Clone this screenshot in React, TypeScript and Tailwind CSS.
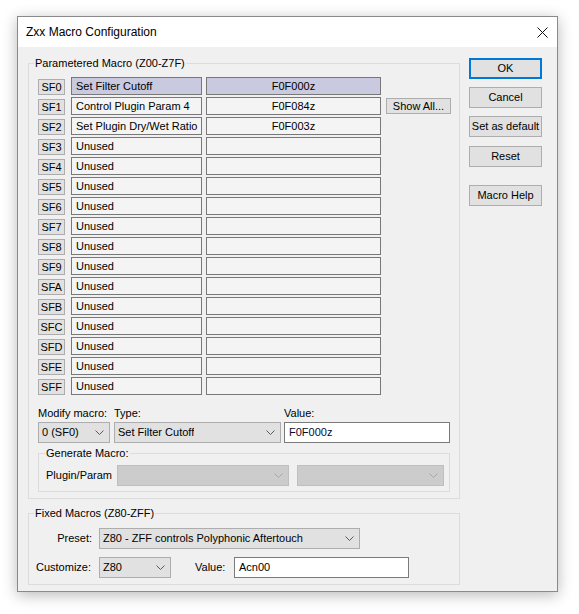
import React from 'react';
import clsx from 'clsx';

type Macro = { slot: string; name: string; value: string };

const macros: Macro[] = [
  { slot: 'SF0', name: 'Set Filter Cutoff', value: 'F0F000z' },
  { slot: 'SF1', name: 'Control Plugin Param 4', value: 'F0F084z' },
  { slot: 'SF2', name: 'Set Plugin Dry/Wet Ratio', value: 'F0F003z' },
  ...['SF3', 'SF4', 'SF5', 'SF6', 'SF7', 'SF8', 'SF9', 'SFA', 'SFB', 'SFC', 'SFD', 'SFE', 'SFF'].map(
    (slot) => ({ slot, name: 'Unused', value: '' })
  ),
];

const Chevron: React.FC<{ disabled?: boolean }> = ({ disabled }) => (
  <svg width="9" height="5" viewBox="0 0 9 5" className="shrink-0">
    <polyline
      points="0.5,0.5 4.5,4.5 8.5,0.5"
      fill="none"
      stroke={disabled ? '#a8a8a8' : '#5a5a5a'}
      strokeWidth="1"
    />
  </svg>
);

const Combo: React.FC<{ className?: string; text?: string; disabled?: boolean }> = ({
  className,
  text,
  disabled,
}) => (
  <div
    className={clsx(
      'flex h-[21px] items-center justify-between border pl-[3px] pr-[5px]',
      disabled ? 'border-[#bfbfbf] bg-[#cccccc]' : 'border-[#adadad] bg-[#e1e1e1]',
      className
    )}
  >
    <span className="truncate">{text}</span>
    <Chevron disabled={disabled} />
  </div>
);

const Button: React.FC<{ label: string; primary?: boolean; className?: string }> = ({
  label,
  primary,
  className,
}) => (
  <div
    className={clsx(
      'flex h-[21px] w-[73px] items-center justify-center bg-[#e1e1e1]',
      primary ? 'border-2 border-[#0078d7]' : 'border border-[#adadad]',
      className
    )}
  >
    {label}
  </div>
);

const MacroRow: React.FC<{ macro: Macro; selected: boolean; showAll?: boolean }> = ({
  macro,
  selected,
  showAll,
}) => {
  const box = selected ? 'bg-[#c9c9df]' : 'bg-[#f4f4f4]';
  return (
    <div className="mb-[2px] flex h-[18px] items-end">
      {/* slot button */}
      <div className="flex h-[16px] w-[27px] items-center justify-center border border-[#adadad] bg-[#e1e1e1]">
        {macro.slot}
      </div>
      {/* name */}
      <div className={clsx('ml-[6px] flex h-[18px] w-[131px] items-center border border-[#787878] pl-[4px]', box)}>
        {macro.name}
      </div>
      {/* value */}
      <div className={clsx('ml-[4px] flex h-[18px] w-[175px] items-center justify-center border border-[#787878]', box)}>
        {macro.value}
      </div>
      {showAll && (
        <div className="ml-[5px] flex h-[16px] w-[65px] items-center justify-center self-center border border-[#adadad] bg-[#e1e1e1]">
          Show All...
        </div>
      )}
    </div>
  );
};

export default function App() {
  return (
    <div className="min-h-[614px] bg-white pl-[17px] pt-[16px] font-['Liberation_Sans',Arial,sans-serif] text-[11px] text-black">
      <div className="flex h-[576px] w-[541px] flex-col border border-[#8a8a8a] bg-[#f0f0f0] shadow-[0_3px_14px_rgba(0,0,0,0.28)]">
        {/* Title bar */}
        <div className="flex h-[30px] shrink-0 items-center justify-between bg-white pl-[8px] pr-[9px]">
          <span className="text-[12px]">Zxx Macro Configuration</span>
          <svg width="11" height="11" viewBox="0 0 11 11">
            <path d="M0.5 0.5 L10.5 10.5 M10.5 0.5 L0.5 10.5" stroke="#111" strokeWidth="1" />
          </svg>
        </div>

        {/* Body */}
        <div className="flex flex-1 pl-[10px]">
          <div className="flex w-[432px] flex-col">
            {/* Parametered Macro group */}
            <fieldset className="mt-[9px] border border-[#dcdcdc] p-0">
              <legend className="ml-[5px] px-[1px] leading-[14px]">Parametered Macro (Z00-Z7F)</legend>
              <div className="pb-[6px] pl-[9px] pt-[7px]">
                {macros.map((m, i) => (
                  <MacroRow key={m.slot} macro={m} selected={i === 0} showAll={i === 1} />
                ))}

                <div className="mt-[12px] flex leading-[13px]">
                  <span className="w-[76px]">Modify macro:</span>
                  <span className="w-[170px]">Type:</span>
                  <span>Value:</span>
                </div>
                <div className="mt-[2px] flex">
                  <Combo className="w-[72px]" text="0 (SF0)" />
                  <Combo className="ml-[4px] w-[167px]" text="Set Filter Cutoff" />
                  <div className="ml-[3px] flex h-[21px] w-[166px] items-center border border-[#7a7a7a] bg-white pl-[4px] text-[#0a0a30]">
                    F0F000z
                  </div>
                </div>

                {/* Generate Macro group */}
                <fieldset className="mt-[3px] w-[412px] border border-[#dcdcdc] p-0">
                  <legend className="ml-[6px] px-[1px] leading-[14px]">Generate Macro:</legend>
                  <div className="flex items-center pb-[5px] pl-[7px] pt-[5px]">
                    <span className="w-[71px]">Plugin/Param</span>
                    <Combo className="w-[172px]" disabled />
                    <Combo className="ml-[8px] w-[147px]" disabled />
                  </div>
                </fieldset>
              </div>
            </fieldset>

            {/* Fixed Macros group */}
            <fieldset className="mt-[7px] border border-[#dcdcdc] p-0">
              <legend className="ml-[5px] px-[1px] leading-[14px]">Fixed Macros (Z80-ZFF)</legend>
              <div className="pb-[6px] pl-[7px] pt-[8px]">
                <div className="flex items-center">
                  <span className="w-[63px] pr-[7px] text-right">Preset:</span>
                  <Combo className="w-[261px]" text="Z80 - ZFF controls Polyphonic Aftertouch" />
                </div>
                <div className="mt-[8px] flex items-center">
                  <span className="w-[63px]">Customize:</span>
                  <Combo className="w-[72px]" text="Z80" />
                  <span className="ml-[24px] w-[39px]">Value:</span>
                  <div className="flex h-[21px] w-[175px] items-center border border-[#7a7a7a] bg-white pl-[4px]">
                    Acn00
                  </div>
                </div>
              </div>
            </fieldset>
          </div>

          {/* Right buttons */}
          <div className="ml-[9px] mt-[11px] flex flex-col">
            <Button label="OK" primary />
            <Button label="Cancel" className="mt-[8px]" />
            <Button label="Set as default" className="mt-[8px]" />
            <Button label="Reset" className="mt-[9px]" />
            <Button label="Macro Help" className="mt-[18px]" />
          </div>
        </div>
      </div>
    </div>
  );
}
